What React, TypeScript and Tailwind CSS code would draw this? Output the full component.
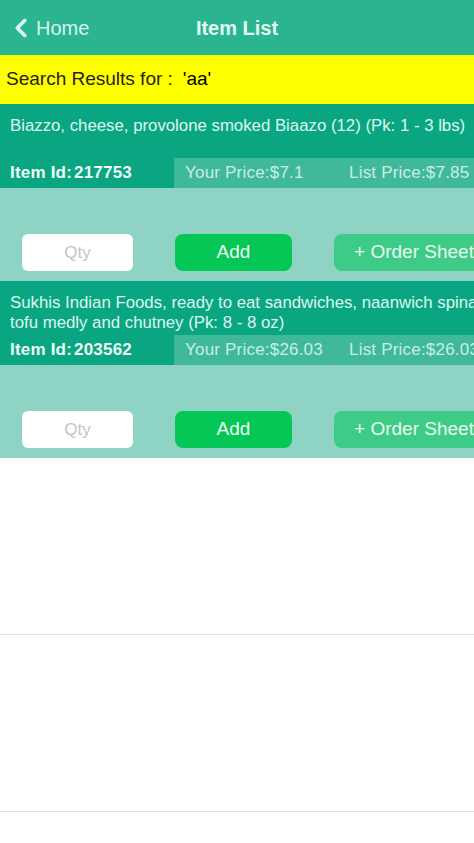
import { ChevronLeft } from "lucide-react";

type Item = {
  lines: string[];
  id: string;
  yourPrice: string;
  listPrice: string;
};

const items: Item[] = [
  {
    lines: ["Biazzo, cheese, provolone smoked Biaazo (12) (Pk: 1 - 3 lbs)"],
    id: "217753",
    yourPrice: "$7.1",
    listPrice: "$7.85",
  },
  {
    lines: ["Sukhis Indian Foods, ready to eat sandwiches, naanwich spinach", "tofu medly and chutney (Pk: 8 - 8 oz)"],
    id: "203562",
    yourPrice: "$26.03",
    listPrice: "$26.03",
  },
];

function ItemCard({ item }: { item: Item }) {
  return (
    <div>
      <div className="h-[54px] overflow-hidden whitespace-nowrap bg-[#0aa681] pl-[10px] pt-[12px] text-[16.8px] leading-[20px] text-[#dff7f0]">
        {item.lines.map((l) => (
          <p key={l}>{l}</p>
        ))}
      </div>
      <div className="flex h-[30px] items-center text-[17px] leading-[30px] tracking-[0.2px]">
        <div className="h-full w-[174px] shrink-0 bg-[#0aa681] pl-[10px] font-bold text-[#eefbf7]">
          Item Id:<span className="ml-[2px]">{item.id}</span>
        </div>
        <div className="flex h-full flex-1 overflow-hidden whitespace-nowrap bg-[#40b99a] text-[#c9eee3]">
          <span className="w-[175px] shrink-0 pl-[11px]">Your Price:{item.yourPrice}</span>
          <span>List Price:{item.listPrice}</span>
        </div>
      </div>
      <div className="flex items-center overflow-hidden bg-[#8fd3c5] pb-[10px] pl-[22px] pt-[46px]">
        <div className="flex h-[37px] w-[111px] shrink-0 items-center justify-center rounded-[6px] bg-white text-[17px] text-[#c4c4c8]">
          Qty
        </div>
        <button
          type="button"
          className="ml-[42px] flex h-[37px] w-[117px] shrink-0 items-center justify-center rounded-[8px] bg-[#05c755] text-[19px] text-[#f2fff6]"
        >
          Add
        </button>
        <button
          type="button"
          className="ml-[42px] flex h-[37px] w-[160px] shrink-0 items-center justify-center whitespace-nowrap rounded-[8px] bg-[#3ecb88] text-[19px] text-[#e8fbf0]"
        >
          + Order Sheet
        </button>
      </div>
    </div>
  );
}

export default function App() {
  return (
    <div className="h-[843px] w-[474px] overflow-hidden bg-white font-['Liberation_Sans',Arial,sans-serif]">
      <header className="relative flex h-[55px] items-center bg-[#2ab48f]">
        <div className="flex items-center pl-[8px] text-[#d6f5ec]">
          <ChevronLeft size={30} strokeWidth={3} className="-ml-[2px]" />
          <span className="text-[20px]">Home</span>
        </div>
        <h1 className="absolute left-0 right-0 text-center text-[20px] font-bold text-[#e4f8f2]">Item List</h1>
      </header>
      <div className="flex h-[49px] items-center bg-[#ffff00] pl-[6px] text-[19px] text-[#222]">
        Search Results for :
        <span className="ml-[10px] text-black">'aa'</span>
      </div>
      {items.map((item) => (
        <ItemCard key={item.id} item={item} />
      ))}
      <div className="mt-[176px] border-t border-[#e0e0e0]" />
      <div className="mt-[176px] border-t border-[#e0e0e0]" />
    </div>
  );
}
